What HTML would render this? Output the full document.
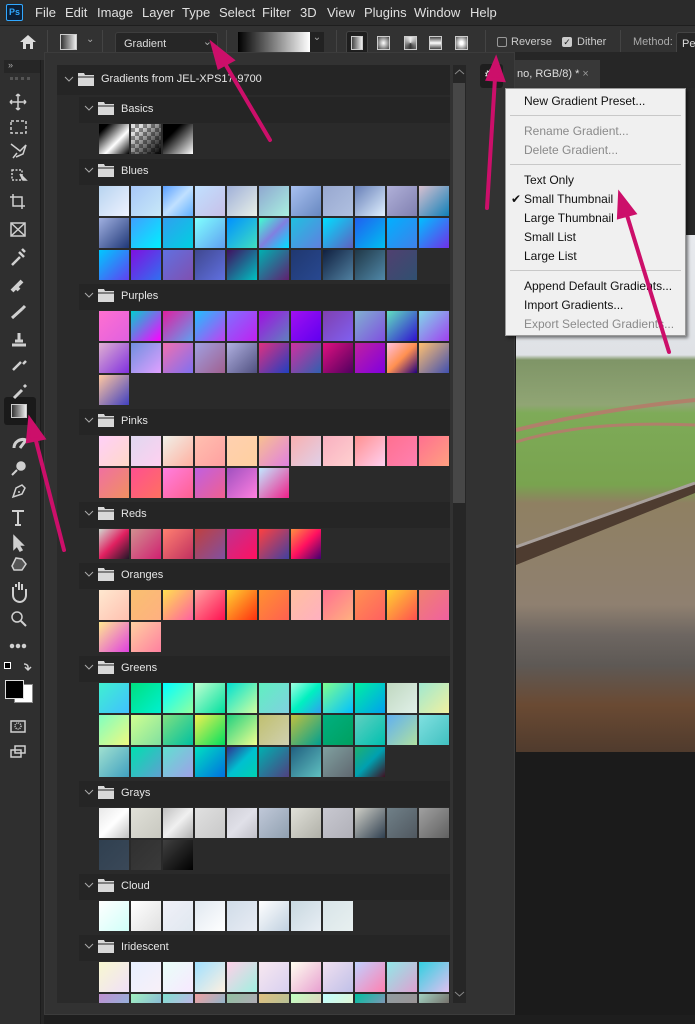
<!DOCTYPE html>
<html><head><meta charset="utf-8"><style>
*{margin:0;padding:0;box-sizing:border-box}
body{width:695px;height:1024px;overflow:hidden;background:#1b1b1b;font-family:"Liberation Sans",sans-serif;position:relative;color:#ddd}
.a{position:absolute}
#menubar{left:0;top:0;width:695px;height:25px;background:#2b2b2b}
#menubar span{position:absolute;top:5px;font-size:13px;color:#e0e0e0}
#opts{left:0;top:25px;width:695px;height:35px;background:#323232;border-top:1px solid #1e1e1e}
#tools{left:0;top:60px;width:40px;height:964px;background:#2f2f2f}
#strip{left:40px;top:60px;width:4px;height:964px;background:#262626;border-left:1px solid #1c1c1c}
#panel{left:44px;top:52px;width:471px;height:963px;background:#323232;border:1px solid #3c3c3c}
#list{left:57px;top:65px;width:393px;height:938px;overflow:hidden;background:#2a2a2a}
.hd{position:absolute;left:22px;width:371px;height:26px;background:#252525;font-size:11px;color:#e6e6e6}
.hd .t{position:absolute;left:42px;top:6px}
.hd svg{position:absolute;left:5px;top:7px}
.g{position:absolute;left:42px;top:27px;display:grid;grid-template-columns:repeat(11,30px);gap:2px}
.g i{display:block;width:30px;height:30px}
.sec{position:absolute;left:0;width:393px}
#menu{left:505px;top:88px;width:181px;height:248px;background:#f0f0f0;border:1px solid #9a9a9a;box-shadow:2px 2px 3px rgba(0,0,0,.5);font-size:12px;color:#111}
#menu div{position:absolute;left:18px}
#menu .d{color:#8a8a8a}
#menu hr{position:absolute;left:4px;width:171px;border:0;border-top:1px solid #c8c8c8}
</style></head><body>
<div id="menubar" class="a">
<div class="a" style="left:6px;top:4px;width:17px;height:17px;background:#0c1f36;border:1px solid #31a8ff;border-radius:2px;color:#31a8ff;font-size:9px;font-weight:bold;text-align:center;line-height:15px">Ps</div>
<span style="left:35px">File</span><span style="left:65px">Edit</span><span style="left:97px">Image</span><span style="left:142px">Layer</span><span style="left:182px">Type</span><span style="left:219px">Select</span><span style="left:262px">Filter</span><span style="left:300px">3D</span><span style="left:327px">View</span><span style="left:364px">Plugins</span><span style="left:414px">Window</span><span style="left:470px">Help</span>
</div>
<div id="opts" class="a">
<svg class="a" style="left:19px;top:8px" width="18" height="16"><path d="M9 1 L1 8 H4 V15 H7 V10 H11 V15 H14 V8 H17 Z" fill="#ddd"/></svg>
<div class="a" style="left:47px;top:4px;width:1px;height:26px;background:#444"></div>
<div class="a" style="left:60px;top:8px;width:17px;height:16px;border:1px solid #ccc;background:linear-gradient(90deg,#333,#eee)"></div>
<div class="a" style="left:86px;top:8px;font-size:10px;color:#aaa">&#8964;</div>
<div class="a" style="left:102px;top:4px;width:1px;height:26px;background:#444"></div>
<div class="a" style="left:115px;top:6px;width:103px;height:23px;background:#262626;border:1px solid #3e3e3e;border-radius:3px;font-size:11px;color:#ddd;padding:5px 0 0 8px">Gradient<span style="position:absolute;right:5px;top:2px;color:#aaa">&#8964;</span></div>
<div class="a" style="left:226px;top:4px;width:1px;height:26px;background:#444"></div>
<div class="a" style="left:238px;top:6px;width:72px;height:23px;background:linear-gradient(90deg,#000,#fff)"></div>
<div class="a" style="left:310px;top:6px;width:14px;height:23px;background:#222;color:#aaa;font-size:10px;text-align:center">&#8964;</div>
<div class="a" style="left:336px;top:4px;width:1px;height:26px;background:#444"></div>
<div class="a" style="left:346px;top:5px;width:22px;height:24px;background:#1e1e1e;border:1px solid #444;border-radius:3px"></div>
<div class="a" style="left:351px;top:10px;width:12px;height:14px;background:linear-gradient(90deg,#444,#eee);border:1px solid #ccc"></div>
<div class="a" style="left:377px;top:10px;width:13px;height:14px;background:radial-gradient(#fff,#444);border:1px solid #ccc"></div>
<div class="a" style="left:404px;top:10px;width:13px;height:14px;background:conic-gradient(#eee,#333,#eee);border:1px solid #ccc"></div>
<div class="a" style="left:429px;top:10px;width:13px;height:14px;background:linear-gradient(#444,#fff,#444);border:1px solid #ccc"></div>
<div class="a" style="left:455px;top:10px;width:13px;height:14px;background:radial-gradient(#fff 20%,#555);border:1px solid #ccc"></div>
<div class="a" style="left:485px;top:4px;width:1px;height:26px;background:#444"></div>
<div class="a" style="left:497px;top:11px;width:10px;height:10px;border:1px solid #999;border-radius:2px"></div>
<div class="a" style="left:511px;top:10px;font-size:11px;color:#ccc">Reverse</div>
<div class="a" style="left:562px;top:11px;width:10px;height:10px;background:#ccc;border-radius:2px;font-size:9px;color:#222;line-height:10px;text-align:center">&#10003;</div>
<div class="a" style="left:577px;top:10px;font-size:11px;color:#ccc">Dither</div>
<div class="a" style="left:620px;top:4px;width:1px;height:26px;background:#444"></div>
<div class="a" style="left:633px;top:10px;font-size:11px;color:#aaa">Method:</div>
<div class="a" style="left:676px;top:6px;width:30px;height:23px;background:#262626;border:1px solid #444;border-radius:3px;font-size:11px;padding:5px 0 0 5px">Pe</div>
</div>
<div id="tools" class="a">
<div class="a" style="left:4px;top:0;width:36px;height:13px;background:#262626;font-size:9px;color:#aaa;padding-left:4px">&#187;</div>
<div class="a" style="left:10px;top:17px;width:20px;height:3px;border-top:3px dotted #555"></div>
<div class="a" style="left:4px;top:337px;width:32px;height:28px;background:#1a1a1a;border-radius:3px"></div>
<div class="a" style="left:11px;top:344px;width:16px;height:14px;border:1px solid #ccc;background:linear-gradient(90deg,#333,#eee)"></div>
<svg class="a" style="left:0;top:0" width="40" height="720" fill="none" stroke="#d0d0d0" stroke-width="1.5">
<path d="M18 34v16M10 42h16M18 34l-2 2M18 34l2 2M18 50l-2-2M18 50l2-2M10 42l2-2M10 42l2 2M26 42l-2-2M26 42l-2 2"/>
<rect x="11" y="61" width="15" height="12" stroke-dasharray="3 2"/>
<path d="M11 84l9 7 6-6-3 9 -7 3M13 98l4-5"/>
<rect x="12" y="110" width="10" height="10" stroke-dasharray="2 1.5"/><path d="M20 114l6 6-3 0z" fill="#d0d0d0"/>
<path d="M13 134v12h12M10 137h12v12"/>
<rect x="11" y="163" width="14" height="13"/><path d="M11 163l14 13M25 163l-14 13"/>
<path d="M12 205l8-8M19 192l5 5M22 189l3 3" stroke-width="2.5"/>
<path d="M12 231l10-10M15 226l4 4" stroke-width="4"/>
<path d="M12 258l10-9M22 249l3-3" stroke-width="3"/>
<path d="M12 285h14M15 281h8M19 273v8" stroke-width="3"/>
<path d="M13 310l8-8M23 304l3-3" stroke-width="2.5"/>
<path d="M14 338l8-8M24 325l2 2" stroke-width="3"/>
<path d="M14 388c0-6 6-10 12-8l-6 8" stroke-width="3"/>
<circle cx="21" cy="406" r="4" fill="#d0d0d0"/><path d="M17 410l-5 5" stroke-width="2"/>
<path d="M13 437l3-9 6-3 3 3-3 6-9 3zM18 432l2 0"/>
<path d="M12 451h12M18 451v14M15 465h6" stroke-width="2"/>
<path d="M14 476v13l3-3 3 5 2-1-3-5h4z" fill="#d0d0d0"/>
<path d="M12 506l4-8 6 1 4 5-4 6-8 0z" fill="#555"/>
<path d="M13 527v8c0 5 4 7 7 7s6-3 6-7v-6M16 527v-3M19 522v8M22 524v6" stroke-width="2"/>
<circle cx="17" cy="557" r="5"/><path d="M21 561l5 5" stroke-width="2"/>
<circle cx="12" cy="586" r="1.5" fill="#d0d0d0"/><circle cx="18" cy="586" r="1.5" fill="#d0d0d0"/><circle cx="24" cy="586" r="1.5" fill="#d0d0d0"/>
<path d="M25 607l3 3 3-3M28 610v-3c0-2-2-3-4-3"/>
<rect x="11" y="661" width="14" height="11"/><circle cx="18" cy="666" r="3" stroke-dasharray="1 1"/>
<rect x="11" y="690" width="10" height="7"/><rect x="15" y="686" width="10" height="7"/>
</svg>
<div class="a" style="left:4px;top:602px;width:7px;height:7px;background:#000;border:1px solid #fff"></div>
<div class="a" style="left:14px;top:624px;width:19px;height:19px;background:#fff;border:1px solid #888"></div>
<div class="a" style="left:5px;top:620px;width:19px;height:19px;background:#000;border:1px solid #ddd"></div>
</div>
<div id="strip" class="a"></div>
<div class="a" style="left:515px;top:52px;width:180px;height:36px;background:#262626"></div>
<div class="a" style="left:515px;top:60px;width:85px;height:28px;background:#383838;font-size:11px;color:#ddd;padding:8px 0 0 2px">no, RGB/8) * <span style="color:#999">&#215;</span></div>
<div class="a" style="left:515px;top:88px;width:180px;height:147px;background:#282828"></div>
<div class="a" style="left:516px;top:235px;width:179px;height:517px;background:linear-gradient(#e8eaee 0,#dfe2e6 120px,#7f9567 125px,#90a574 170px,#7eab58 178px,#79a34f 250px,#8f8062 268px,#8f8070 370px,#6d6661 400px,#5e5955 430px,#6a4a33 470px,#503b2d 517px)"></div>
<svg class="a" style="left:516px;top:235px" width="179" height="517"><path d="M0 312 L179 248 L179 258 L0 330Z" fill="#4e3c30"/><path d="M0 312 L179 248" stroke="#a8a09c" stroke-width="3"/><path d="M0 195 Q80 175 179 165" stroke="#b0806a" stroke-width="4" fill="none"/><path d="M0 -3 Q70 -25 179 -20" stroke="#b0806a" stroke-width="3" fill="none" transform="translate(0,210)"/></svg>
<div id="panel" class="a"></div>
<div id="list" class="a">
<div class="a" style="left:0;top:0;width:393px;height:30px;background:#252525;font-size:11px;color:#e6e6e6">
<svg class="a" style="left:7px;top:10px" width="10" height="8"><path d="M1 2l4 4 4-4" stroke="#aaa" fill="none"/></svg>
<svg class="a" style="left:21px;top:8px" width="16" height="13"><path d="M0 0h6l1 2h9v11H0z" fill="#d8d8d8"/><path d="M0 4h16" stroke="#252525"/></svg>
<span class="a" style="left:44px;top:8px">Gradients from JEL-XPS17-9700</span></div>
<div class="sec" style="top:32px"><div class="hd"><svg width="10" height="8"><path d="M1 2l4 4 4-4" stroke="#aaa" fill="none"/></svg><svg style="left:19px;top:5px" width="16" height="13"><path d="M0 0h6l1 2h9v11H0z" fill="#d8d8d8"/><path d="M0 4h16" stroke="#252525"/></svg><span class="t">Basics</span></div>
<div class="g"><i style="background:linear-gradient(135deg,#000 15%,#fff 60%,#000)"></i><i style="background:linear-gradient(135deg,transparent 20%,#000),repeating-conic-gradient(#888 0 25%,#ddd 0 50%) 0 0/8px 8px"></i><i style="background:linear-gradient(135deg,#000 30%,#fff)"></i></div></div>
<div class="sec" style="top:94px"><div class="hd"><svg width="10" height="8"><path d="M1 2l4 4 4-4" stroke="#aaa" fill="none"/></svg><svg style="left:19px;top:5px" width="16" height="13"><path d="M0 0h6l1 2h9v11H0z" fill="#d8d8d8"/><path d="M0 4h16" stroke="#252525"/></svg><span class="t">Blues</span></div>
<div class="g">
<i style="background:linear-gradient(135deg,#b8d4f0,#eef2ff)"></i><i style="background:linear-gradient(135deg,#a8c8f8,#c8e8f8)"></i><i style="background:linear-gradient(135deg,#5aa0ff,#c0e0ff,#60b0ff)"></i><i style="background:linear-gradient(135deg,#c0e0ff,#c8c0e8)"></i><i style="background:linear-gradient(135deg,#a0b0d8,#e8f0e8)"></i><i style="background:linear-gradient(135deg,#90a8d0,#a8f0e0)"></i><i style="background:linear-gradient(135deg,#a8c0f0,#6888c0)"></i><i style="background:linear-gradient(135deg,#98a8d0,#b0c0e0)"></i><i style="background:linear-gradient(135deg,#6880b8,#e0f0ff)"></i><i style="background:linear-gradient(135deg,#b0b0d8,#8080b0)"></i><i style="background:linear-gradient(135deg,#d8c0d0,#1080b8)"></i>
<i style="background:linear-gradient(135deg,#a0b0e0,#203878)"></i><i style="background:linear-gradient(135deg,#40a0ff,#00f0ff)"></i><i style="background:linear-gradient(135deg,#30a0f0,#00d0e0)"></i><i style="background:linear-gradient(135deg,#80ffff,#60a0f0)"></i><i style="background:linear-gradient(135deg,#0090ff,#40e0c0)"></i><i style="background:linear-gradient(135deg,#40ffd0,#8080e0,#00e0ff)"></i><i style="background:linear-gradient(135deg,#20c0e0,#6080e0)"></i><i style="background:linear-gradient(135deg,#00e0ff,#6060c0)"></i><i style="background:linear-gradient(135deg,#2060f0,#00c0f0)"></i><i style="background:linear-gradient(135deg,#00b0ff,#4080e8)"></i><i style="background:linear-gradient(135deg,#00c0ff,#7030e8)"></i>
<i style="background:linear-gradient(135deg,#00c8ff,#6040f0)"></i><i style="background:linear-gradient(135deg,#8010e0,#3070f0)"></i><i style="background:linear-gradient(135deg,#6070e0,#8050b0)"></i><i style="background:linear-gradient(135deg,#404890,#6070e0)"></i><i style="background:linear-gradient(135deg,#401060,#00c0c0)"></i><i style="background:linear-gradient(135deg,#00b0b0,#602070)"></i><i style="background:linear-gradient(135deg,#203870,#284890)"></i><i style="background:linear-gradient(135deg,#102040,#5080a0)"></i><i style="background:linear-gradient(135deg,#203848,#5088a8)"></i><i style="background:linear-gradient(135deg,#504070,#305070)"></i>
</div></div>
<div class="sec" style="top:219px"><div class="hd"><svg width="10" height="8"><path d="M1 2l4 4 4-4" stroke="#aaa" fill="none"/></svg><svg style="left:19px;top:5px" width="16" height="13"><path d="M0 0h6l1 2h9v11H0z" fill="#d8d8d8"/><path d="M0 4h16" stroke="#252525"/></svg><span class="t">Purples</span></div>
<div class="g">
<i style="background:linear-gradient(135deg,#ff70d0,#e060e0)"></i><i style="background:linear-gradient(135deg,#00d0d0,#ff00ff)"></i><i style="background:linear-gradient(135deg,#e020a0,#60a0f0)"></i><i style="background:linear-gradient(135deg,#20c0ff,#c040f0)"></i><i style="background:linear-gradient(135deg,#8070ff,#c020f0)"></i><i style="background:linear-gradient(135deg,#a010e0,#6080c0)"></i><i style="background:linear-gradient(135deg,#a010f0,#6000f0)"></i><i style="background:linear-gradient(135deg,#8040b0,#8060f0)"></i><i style="background:linear-gradient(135deg,#80b0d0,#8050e0)"></i><i style="background:linear-gradient(135deg,#60e0c0,#3010d0)"></i><i style="background:linear-gradient(135deg,#80d8e8,#a040f0)"></i>
<i style="background:linear-gradient(135deg,#e0b0d0,#8030e0)"></i><i style="background:linear-gradient(135deg,#7090e0,#e0a0ff)"></i><i style="background:linear-gradient(135deg,#f070b0,#8070f0)"></i><i style="background:linear-gradient(135deg,#a0a0e0,#a06090)"></i><i style="background:linear-gradient(135deg,#b0b0e0,#505080)"></i><i style="background:linear-gradient(135deg,#e03080,#2040c0)"></i><i style="background:linear-gradient(135deg,#d030a0,#3060b0)"></i><i style="background:linear-gradient(135deg,#e01080,#500060)"></i><i style="background:linear-gradient(135deg,#c020a0,#8000e0)"></i><i style="background:linear-gradient(135deg,#ffc0e0,#ff9050,#200080)"></i><i style="background:linear-gradient(135deg,#ffc070,#4050b0)"></i>
<i style="background:linear-gradient(135deg,#ffc8a0,#4040c0)"></i>
</div></div>
<div class="sec" style="top:344px"><div class="hd"><svg width="10" height="8"><path d="M1 2l4 4 4-4" stroke="#aaa" fill="none"/></svg><svg style="left:19px;top:5px" width="16" height="13"><path d="M0 0h6l1 2h9v11H0z" fill="#d8d8d8"/><path d="M0 4h16" stroke="#252525"/></svg><span class="t">Pinks</span></div>
<div class="g">
<i style="background:linear-gradient(135deg,#ffd0f8,#ffd8c8)"></i><i style="background:linear-gradient(135deg,#e0d8f0,#ffd0f0)"></i><i style="background:linear-gradient(135deg,#f0f0e8,#ffb0a0)"></i><i style="background:linear-gradient(135deg,#ffc0b0,#ffa0a0)"></i><i style="background:linear-gradient(135deg,#ffd0b0,#ffd0a0)"></i><i style="background:linear-gradient(135deg,#f8c090,#e080e0)"></i><i style="background:linear-gradient(135deg,#f8b0b0,#e0d0e8)"></i><i style="background:linear-gradient(135deg,#f8b0c0,#ffd0d0)"></i><i style="background:linear-gradient(135deg,#ff9090,#ffd0f0)"></i><i style="background:linear-gradient(135deg,#ff7090,#ff80b0)"></i><i style="background:linear-gradient(135deg,#ff7090,#ffa080)"></i>
<i style="background:linear-gradient(135deg,#f070a0,#f09060)"></i><i style="background:linear-gradient(135deg,#ff5090,#ff7060)"></i><i style="background:linear-gradient(135deg,#ff80e0,#ff6090)"></i><i style="background:linear-gradient(135deg,#c060e0,#f06090)"></i><i style="background:linear-gradient(135deg,#a050c0,#ff80e0)"></i><i style="background:linear-gradient(135deg,#c0e8ff,#f0208a)"></i>
</div></div>
<div class="sec" style="top:437px"><div class="hd"><svg width="10" height="8"><path d="M1 2l4 4 4-4" stroke="#aaa" fill="none"/></svg><svg style="left:19px;top:5px" width="16" height="13"><path d="M0 0h6l1 2h9v11H0z" fill="#d8d8d8"/><path d="M0 4h16" stroke="#252525"/></svg><span class="t">Reds</span></div>
<div class="g">
<i style="background:linear-gradient(135deg,#d0d8d0,#e02060,#201828)"></i><i style="background:linear-gradient(135deg,#d09090,#d02070)"></i><i style="background:linear-gradient(135deg,#ff8070,#c03060)"></i><i style="background:linear-gradient(135deg,#c04040,#8050a0)"></i><i style="background:linear-gradient(135deg,#c03090,#ff1060)"></i><i style="background:linear-gradient(135deg,#ff4040,#4040a0)"></i><i style="background:linear-gradient(135deg,#ff9040,#ff1060,#400070)"></i>
</div></div>
<div class="sec" style="top:498px"><div class="hd"><svg width="10" height="8"><path d="M1 2l4 4 4-4" stroke="#aaa" fill="none"/></svg><svg style="left:19px;top:5px" width="16" height="13"><path d="M0 0h6l1 2h9v11H0z" fill="#d8d8d8"/><path d="M0 4h16" stroke="#252525"/></svg><span class="t">Oranges</span></div>
<div class="g">
<i style="background:linear-gradient(135deg,#ffe8d0,#ffc0b0)"></i><i style="background:linear-gradient(135deg,#f8c070,#ffb080)"></i><i style="background:linear-gradient(135deg,#ffe050,#ff60a0)"></i><i style="background:linear-gradient(135deg,#ffa0a0,#ff1050)"></i><i style="background:linear-gradient(135deg,#ffd030,#ff3010)"></i><i style="background:linear-gradient(135deg,#ff9030,#ff6050)"></i><i style="background:linear-gradient(135deg,#ffc0a0,#ffb0c0)"></i><i style="background:linear-gradient(135deg,#ff7090,#ffb080)"></i><i style="background:linear-gradient(135deg,#ff9050,#ff6060)"></i><i style="background:linear-gradient(135deg,#ffd030,#ff5050)"></i><i style="background:linear-gradient(135deg,#f08070,#f060a0)"></i>
<i style="background:linear-gradient(135deg,#ffe890,#e040e0)"></i><i style="background:linear-gradient(135deg,#ffd0a0,#ff80a0)"></i>
</div></div>
<div class="sec" style="top:591px"><div class="hd"><svg width="10" height="8"><path d="M1 2l4 4 4-4" stroke="#aaa" fill="none"/></svg><svg style="left:19px;top:5px" width="16" height="13"><path d="M0 0h6l1 2h9v11H0z" fill="#d8d8d8"/><path d="M0 4h16" stroke="#252525"/></svg><span class="t">Greens</span></div>
<div class="g">
<i style="background:linear-gradient(135deg,#40f0d0,#40c0ff)"></i><i style="background:linear-gradient(135deg,#00e080,#00f0d0)"></i><i style="background:linear-gradient(135deg,#00ffff,#90ffa0)"></i><i style="background:linear-gradient(135deg,#c0ffd0,#00e0a0)"></i><i style="background:linear-gradient(135deg,#00e0d0,#d0ffa0)"></i><i style="background:linear-gradient(135deg,#60f0c0,#80d0e0)"></i><i style="background:linear-gradient(135deg,#a0ffe0,#00f0c0,#30a0f0)"></i><i style="background:linear-gradient(135deg,#80ff90,#00c0ff)"></i><i style="background:linear-gradient(135deg,#00f0a0,#00a0f0)"></i><i style="background:linear-gradient(135deg,#c0d8c0,#e0f0e8)"></i><i style="background:linear-gradient(135deg,#a0e8d0,#f0f0a0)"></i>
<i style="background:linear-gradient(135deg,#80ffc0,#f0f880)"></i><i style="background:linear-gradient(135deg,#d0ff90,#80e0a0)"></i><i style="background:linear-gradient(135deg,#80e080,#00c0a0)"></i><i style="background:linear-gradient(135deg,#f0f050,#00e060)"></i><i style="background:linear-gradient(135deg,#20d080,#f0ff90)"></i><i style="background:linear-gradient(135deg,#c0c070,#d0d0b0)"></i><i style="background:linear-gradient(135deg,#c0c040,#00a090)"></i><i style="background:linear-gradient(135deg,#00b080,#00a060)"></i><i style="background:linear-gradient(135deg,#60d0c0,#00c0b0)"></i><i style="background:linear-gradient(135deg,#60b0f0,#b0e0a0)"></i><i style="background:linear-gradient(135deg,#80e0e0,#40c0c0)"></i>
<i style="background:linear-gradient(135deg,#a0e0d0,#40a0c0)"></i><i style="background:linear-gradient(135deg,#00e0b0,#60a0d0)"></i><i style="background:linear-gradient(135deg,#60e0d0,#a0a0e8)"></i><i style="background:linear-gradient(135deg,#00e0c0,#0070e0)"></i><i style="background:linear-gradient(135deg,#303090,#00c0d0,#00d0b0)"></i><i style="background:linear-gradient(135deg,#00b0b0,#504080)"></i><i style="background:linear-gradient(135deg,#206080,#60c0c0)"></i><i style="background:linear-gradient(135deg,#80a0a0,#606870)"></i><i style="background:linear-gradient(135deg,#20b070,#00a0b0,#401020)"></i>
</div></div>
<div class="sec" style="top:716px"><div class="hd"><svg width="10" height="8"><path d="M1 2l4 4 4-4" stroke="#aaa" fill="none"/></svg><svg style="left:19px;top:5px" width="16" height="13"><path d="M0 0h6l1 2h9v11H0z" fill="#d8d8d8"/><path d="M0 4h16" stroke="#252525"/></svg><span class="t">Grays</span></div>
<div class="g">
<i style="background:linear-gradient(135deg,#e8e8e8,#fff,#c0c0c0)"></i><i style="background:linear-gradient(135deg,#e0e0d8,#c8c8c0)"></i><i style="background:linear-gradient(135deg,#c0c0c0,#f0f0f0,#b0b0b0)"></i><i style="background:linear-gradient(135deg,#e0e0e0,#c8c8c8)"></i><i style="background:linear-gradient(135deg,#d0d0d8,#e0e0e8,#c0c0c8)"></i><i style="background:linear-gradient(135deg,#c0c8d8,#90a0b0)"></i><i style="background:linear-gradient(135deg,#e0e0d8,#b0b0a8)"></i><i style="background:linear-gradient(135deg,#c8c8d0,#b0b0b8)"></i><i style="background:linear-gradient(135deg,#d0d0c8,#304050)"></i><i style="background:linear-gradient(135deg,#708088,#505860)"></i><i style="background:linear-gradient(135deg,#a0a0a0,#606060)"></i>
<i style="background:linear-gradient(135deg,#304050,#3a4858)"></i><i style="background:linear-gradient(135deg,#303030,#3a3a3a)"></i><i style="background:linear-gradient(135deg,#404040,#000)"></i>
</div></div>
<div class="sec" style="top:809px"><div class="hd"><svg width="10" height="8"><path d="M1 2l4 4 4-4" stroke="#aaa" fill="none"/></svg><svg style="left:19px;top:5px" width="16" height="13"><path d="M0 0h6l1 2h9v11H0z" fill="#d8d8d8"/><path d="M0 4h16" stroke="#252525"/></svg><span class="t">Cloud</span></div>
<div class="g">
<i style="background:linear-gradient(135deg,#fff,#d0fff8)"></i><i style="background:linear-gradient(135deg,#fff,#e0e0e0)"></i><i style="background:linear-gradient(135deg,#f0f0f8,#e0e8f0)"></i><i style="background:linear-gradient(135deg,#e0e8f0,#fff)"></i><i style="background:linear-gradient(135deg,#d0dce8,#e8ecf4)"></i><i style="background:linear-gradient(135deg,#fff,#c0d0e0)"></i><i style="background:linear-gradient(135deg,#c8d8e0,#e8eef4)"></i><i style="background:linear-gradient(135deg,#d8e4e8,#e8f0f0)"></i>
</div></div>
<div class="sec" style="top:870px"><div class="hd"><svg width="10" height="8"><path d="M1 2l4 4 4-4" stroke="#aaa" fill="none"/></svg><svg style="left:19px;top:5px" width="16" height="13"><path d="M0 0h6l1 2h9v11H0z" fill="#d8d8d8"/><path d="M0 4h16" stroke="#252525"/></svg><span class="t">Iridescent</span></div>
<div class="g">
<i style="background:linear-gradient(135deg,#f8f8d0,#f0e0f8)"></i><i style="background:linear-gradient(135deg,#e8f0ff,#f8f0f8)"></i><i style="background:linear-gradient(135deg,#e8fff8,#f8e8ff)"></i><i style="background:linear-gradient(135deg,#a0e0ff,#fff0e0)"></i><i style="background:linear-gradient(135deg,#ffd0e8,#a0f0e0)"></i><i style="background:linear-gradient(135deg,#f8e8f0,#d8d0f0)"></i><i style="background:linear-gradient(135deg,#fffff0,#e8a0d0)"></i><i style="background:linear-gradient(135deg,#f0e0f0,#c0c0e8)"></i><i style="background:linear-gradient(135deg,#c0d0ff,#ff80b0)"></i><i style="background:linear-gradient(135deg,#90e8e8,#e0a0d0)"></i><i style="background:linear-gradient(135deg,#30d0e0,#e0c0f0)"></i>
<i style="background:linear-gradient(135deg,#c090d0,#80c0e0)"></i><i style="background:linear-gradient(135deg,#a0f0c0,#80a0e0)"></i><i style="background:linear-gradient(135deg,#80e0d0,#e0a0f0)"></i><i style="background:linear-gradient(135deg,#f0a0a0,#60c0e0)"></i><i style="background:linear-gradient(135deg,#90c0a0,#c0a0c0)"></i><i style="background:linear-gradient(135deg,#e0c080,#a0c0a0)"></i><i style="background:linear-gradient(135deg,#c0ffc0,#f0c0c0)"></i><i style="background:linear-gradient(135deg,#c0ffff,#f0f0c0)"></i><i style="background:linear-gradient(135deg,#00c0a0,#c080c0)"></i><i style="background:linear-gradient(135deg,#909ca0,#a09090)"></i><i style="background:linear-gradient(135deg,#a0d0c0,#604040)"></i>
</div></div>
</div>
<div class="a" style="left:453px;top:65px;width:13px;height:938px;background:#262626"></div>
<div class="a" style="left:453px;top:83px;width:12px;height:420px;background:#474747"></div>
<svg class="a" style="left:454px;top:68px" width="11" height="8"><path d="M1 6l4.5-4 4.5 4" stroke="#888" fill="none"/></svg>
<svg class="a" style="left:454px;top:990px" width="11" height="8"><path d="M1 2l4.5 4 4.5-4" stroke="#888" fill="none"/></svg>
<div class="a" style="left:480px;top:64px;width:23px;height:24px;background:#1e1e1e;border-radius:3px;color:#ddd;font-size:13px;padding:3px 0 0 4px">&#9881;<span style="font-size:7px">&#9662;</span></div>
<div class="a" style="left:44px;top:1015px;width:651px;height:9px;background:#1e1e1e"></div>
<div id="menu" class="a">
<div style="top:5px">New Gradient Preset...</div><hr style="top:26px">
<div class="d" style="top:35px">Rename Gradient...</div><div class="d" style="top:54px">Delete Gradient...</div><hr style="top:75px">
<div style="top:84px">Text Only</div><div style="top:103px">Small Thumbnail</div><span style="position:absolute;left:5px;top:103px">&#10004;</span><div style="top:122px">Large Thumbnail</div><div style="top:141px">Small List</div><div style="top:160px">Large List</div><hr style="top:181px">
<div style="top:190px">Append Default Gradients...</div><div style="top:209px">Import Gradients...</div><div class="d" style="top:228px">Export Selected Gradients...</div>
</div>
<svg class="a" style="left:0;top:0" width="695" height="1024">
<g stroke="#cc0f6a" stroke-width="4" fill="#cc0f6a" stroke-linecap="round">
<path d="M270 140 L224 62" fill="none"/><path d="M213 45 L232 60 L219 67Z"/>
<path d="M487 208 L495 78" fill="none"/><path d="M496 60 L503 80 L488 79Z"/>
<path d="M669 352 L626 212" fill="none"/><path d="M620 195 L634 213 L619 217Z"/>
<path d="M64 550 L35 437" fill="none"/><path d="M30 420 L43 438 L28 441Z"/>
</g></svg>
</body></html>
